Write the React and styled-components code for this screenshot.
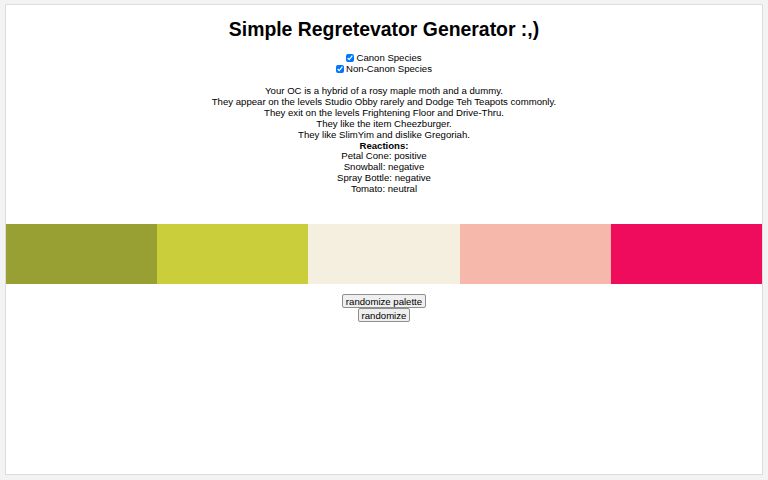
import React, { useState } from 'react'
import styled, { createGlobalStyle } from 'styled-components'

const GlobalStyle = createGlobalStyle`
  body {
    margin: 0;
    background: #f3f3f3;
    font-family: "Liberation Sans", Arial, sans-serif;
  }
`

const Frame = styled.div`
  box-sizing: border-box;
  margin: 4px 5px 0 5px;
  height: 471px;
  background: #fff;
  border: 1px solid #dcdcdc;
  text-align: center;
  color: #000;
`

const Title = styled.h1`
  margin: 0;
  padding-top: 12px;
  font-size: 19.4px;
  line-height: 24px;
  font-weight: bold;
`

const Options = styled.div`
  margin-top: 11px;
  font-size: 9.6px;
  line-height: 11px;
`

const OptionRow = styled.label`
  display: block;
  height: 11px;
`

const Check = styled.input`
  width: 8px;
  height: 8px;
  margin: 0 2px 0 0;
  vertical-align: -1px;
`

const Description = styled.div`
  margin-top: 12px;
  font-size: 9.6px;
  line-height: 10.9px;
`

const Line = styled.div`
  font-weight: ${p => (p.bold ? 'bold' : 'normal')};
`

const Palette = styled.div`
  display: flex;
  height: 60px;
  margin-top: 29px;
`

const Swatch = styled.div`
  flex: 1;
  background: ${p => p.color};
`

const Buttons = styled.div`
  margin-top: 10px;
  display: flex;
  flex-direction: column;
  align-items: center;
  gap: 0;
`

const Button = styled.button`
  font-family: "Liberation Sans", Arial, sans-serif;
  font-size: 9.6px;
  line-height: 11px;
  padding: 0 3px;
  height: 14px;
  border: 1px solid #8f8f8f;
  border-radius: 2px;
  background: #efefef;
  color: #000;
`

const palette = ['#98a033', '#cace3b', '#f5efe0', '#f7b8ac', '#f00c5c']

const lines = [
  'Your OC is a hybrid of a rosy maple moth and a dummy.',
  'They appear on the levels Studio Obby rarely and Dodge Teh Teapots commonly.',
  'They exit on the levels Frightening Floor and Drive-Thru.',
  'They like the item Cheezburger.',
  'They like SlimYim and dislike Gregoriah.',
]

const reactions = [
  'Petal Cone: positive',
  'Snowball: negative',
  'Spray Bottle: negative',
  'Tomato: neutral',
]

export default function App() {
  const [canon, setCanon] = useState(true)
  const [nonCanon, setNonCanon] = useState(true)

  return (
    <>
      <GlobalStyle />
      <Frame>
        <Title>Simple Regretevator Generator :,)</Title>
        <Options>
          <OptionRow>
            <Check type="checkbox" checked={canon} onChange={() => setCanon(!canon)} />
            Canon Species
          </OptionRow>
          <OptionRow>
            <Check type="checkbox" checked={nonCanon} onChange={() => setNonCanon(!nonCanon)} />
            Non-Canon Species
          </OptionRow>
        </Options>
        <Description>
          {lines.map(l => <Line key={l}>{l}</Line>)}
          <Line bold>Reactions:</Line>
          {reactions.map(r => <Line key={r}>{r}</Line>)}
        </Description>
        <Palette>
          {palette.map(c => <Swatch key={c} color={c} />)}
        </Palette>
        <Buttons>
          <Button>randomize palette</Button>
          <Button>randomize</Button>
        </Buttons>
      </Frame>
    </>
  )
}
